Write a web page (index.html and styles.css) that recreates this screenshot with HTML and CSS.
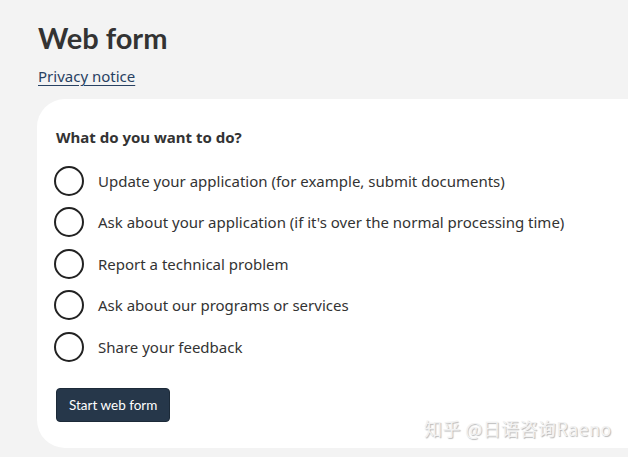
FILE: index.html
```html
<!DOCTYPE html>
<html lang="en">
<head>
<meta charset="utf-8">
<title>Web form</title>
<link rel="stylesheet" href="styles.css">
</head>
<body>
<main class="page">
  <h1 class="title">Web form</h1>
  <a class="privacy" href="#">Privacy notice</a>
  <section class="card">
    <fieldset class="group">
      <legend class="question">What do you want to do?</legend>
      <label class="option"><span class="radio"></span><span class="label">Update your application (for example, submit documents)</span></label>
      <label class="option"><span class="radio"></span><span class="label">Ask about your application (if it's over the normal processing time)</span></label>
      <label class="option"><span class="radio"></span><span class="label">Report a technical problem</span></label>
      <label class="option"><span class="radio"></span><span class="label">Ask about our programs or services</span></label>
      <label class="option"><span class="radio"></span><span class="label">Share your feedback</span></label>
    </fieldset>
    <button class="start" type="button">Start web form</button>
    <div class="watermark">知乎 @日语咨询Raeno</div>
  </section>
</main>
</body>
</html>
```
FILE: styles.css
```css
* { box-sizing: border-box; }
html, body { margin: 0; padding: 0; }
body {
  background: #f3f3f3;
  font-family: "Noto Sans", sans-serif;
  color: #333;
  overflow: hidden;
  width: 628px;
  height: 457px;
}
.page {
  padding: 20px 0 0 37px;
  display: flex;
  flex-direction: column;
  align-items: flex-start;
}
.title {
  font-family: Lato, sans-serif;
  font-weight: 700;
  font-size: 29px;
  line-height: 36px;
  margin: 0 0 0 1px;
  color: #333;
}
.privacy {
  margin-top: 10px;
  margin-left: 1px;
  font-family: "Noto Sans", sans-serif;
  font-size: 15px;
  line-height: 20px;
  color: #284162;
  text-decoration: underline;
  text-underline-offset: 3px;
}
.card {
  position: relative;
  margin-top: 13px;
  width: 620px;
  height: 349px;
  background: #fff;
  border-radius: 28px 0 0 28px;
  padding: 28px 19px 0;
}
.group {
  border: 0;
  margin: 0;
  padding: 0;
  display: flex;
  flex-direction: column;
  gap: 11.4px;
}
.question {
  padding: 0;
  font-weight: 700;
  font-size: 15px;
  line-height: 20px;
  color: #333;
  margin-bottom: 19px;
}
.option {
  display: flex;
  align-items: center;
  gap: 14px;
  height: 30px;
  margin-left: -2px;
  font-size: 15px;
  color: #333;
}
.radio {
  width: 30px;
  height: 30px;
  border: 2px solid #222;
  border-radius: 50%;
  flex: none;
}
.start {
  margin-top: 26px;
  background: #26374a;
  color: #fff;
  font-family: Lato, sans-serif;
  font-size: 13.5px;
  border: 1px solid #1c2a38;
  border-radius: 4px;
  height: 34px;
  padding: 0 12px;
}
.watermark {
  position: absolute;
  left: 387px;
  top: 316px;
  font-family: "Noto Sans CJK SC", sans-serif;
  font-size: 18px;
  letter-spacing: 0.4px;
  color: #f2f2f2;
  text-shadow: 1px 1px 1px #b9b9b9;
  white-space: nowrap;
}
```
